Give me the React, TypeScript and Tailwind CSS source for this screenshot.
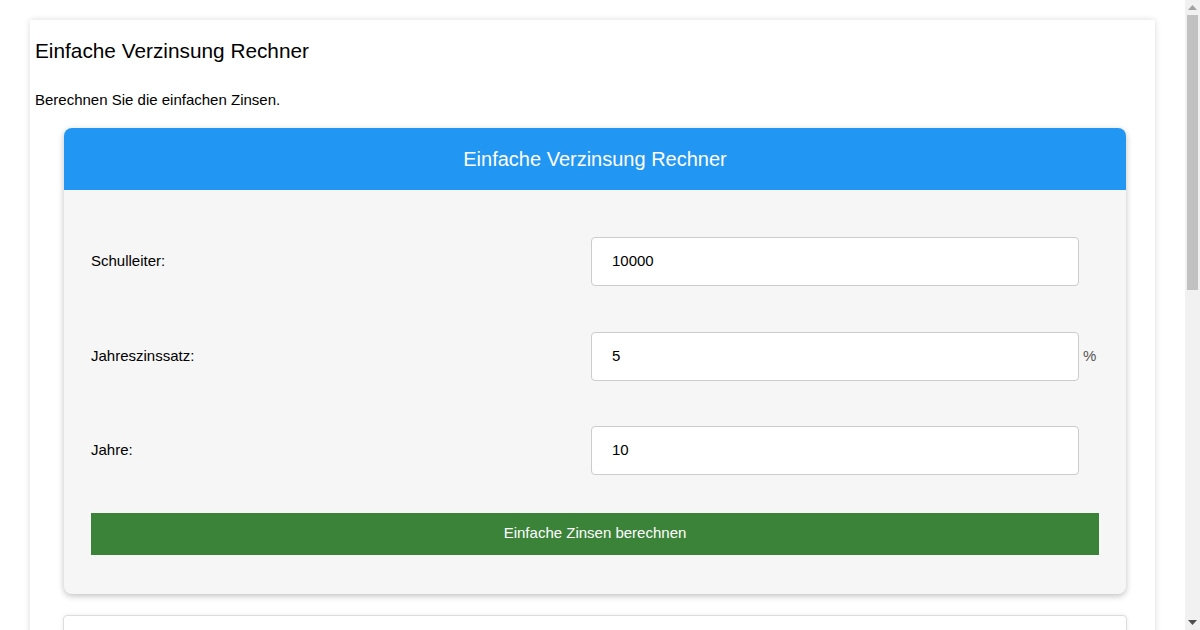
import React from "react";

function Scrollbar() {
  return (
    <div className="flex h-full w-[15px] shrink-0 flex-col bg-[#f1f1f1]">
      <div className="flex h-[15px] items-center justify-center">
        <svg width="9" height="5" viewBox="0 0 9 5"><path d="M4.5 0 L9 5 L0 5 Z" fill="#a3a3a3" /></svg>
      </div>
      <div className="flex-1 px-[2px]">
        <div className="h-[275px] bg-[#c1c1c1]" />
      </div>
      <div className="flex h-[15px] items-center justify-center">
        <svg width="9" height="5" viewBox="0 0 9 5"><path d="M0 0 L9 0 L4.5 5 Z" fill="#505050" /></svg>
      </div>
    </div>
  );
}

export default function App() {
  const rows = [
    { label: "Schulleiter:", value: "10000", suffix: "" },
    { label: "Jahreszinssatz:", value: "5", suffix: "%" },
    { label: "Jahre:", value: "10", suffix: "" },
  ];
  return (
    <div className="flex h-[630px] overflow-hidden bg-white font-['Liberation_Sans',Arial,sans-serif] text-black">
      <div className="min-w-0 flex-1 overflow-hidden pt-5">
        <div className="mx-auto w-[1125px] bg-white px-[5px] pb-10 shadow-[0_0_6px_rgba(0,0,0,0.15)]">
          <h1 className="pt-[19px] text-[20.8px] leading-[24px]">Einfache Verzinsung Rechner</h1>
          <p className="mt-[28px] text-[15px] leading-[18px]">Berechnen Sie die einfachen Zinsen.</p>
          <div className="ml-[29px] mt-[19px] w-[1062px] overflow-hidden rounded-lg bg-[#f6f6f6] shadow-[0_2px_6px_rgba(0,0,0,0.25)]">
            <div className="flex h-[62px] items-center justify-center bg-[#2196f3] text-[20px] text-white">
              Einfache Verzinsung Rechner
            </div>
            <div className="px-[27px] pt-[47px] pb-[39px]">
              <div className="flex flex-col gap-[45.5px]">
                {rows.map((r) => (
                  <div key={r.label} className="grid grid-cols-[500px_488px_20px] items-center">
                    <div className="text-[15px]">{r.label}</div>
                    <div className="flex h-[49px] items-center rounded border border-[#cccccc] bg-white px-5 text-[15px]">
                      {r.value}
                    </div>
                    <div className="pl-1 text-[15px] text-[#555]">{r.suffix}</div>
                  </div>
                ))}
              </div>
              <button className="mt-[37.5px] flex h-[42px] w-full items-center justify-center bg-[#3b8339] text-[15px] text-white">
                Einfache Zinsen berechnen
              </button>
            </div>
          </div>
          <div className="ml-[28px] mt-[21px] h-[200px] w-[1064px] rounded-t border border-[#dddddd] bg-white shadow-[0_0_4px_rgba(0,0,0,0.08)]"></div>
        </div>
      </div>
      <Scrollbar />
    </div>
  );
}
